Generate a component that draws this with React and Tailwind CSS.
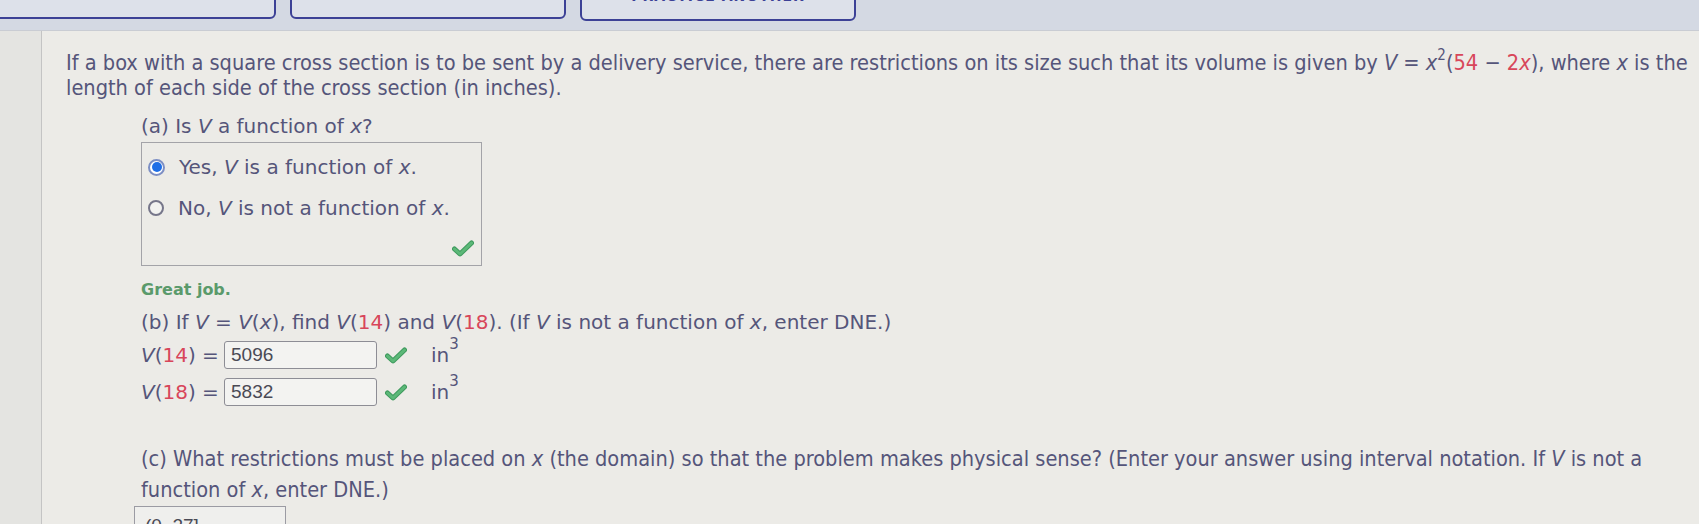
import React from 'react';

// Homework question card: volume of a square-cross-section box.

const TEXT = 'text-[#55557a]';
const RED = 'text-[#d8465a]';

function Var({ children }) {
  return <i className="italic">{children}</i>;
}

function Check() {
  return (
    <svg width="22" height="17" viewBox="0 0 22 17" className="block">
      <path d="M2.5 9 L8 14 L19.5 3" fill="none" stroke="#3f9a5e" strokeWidth="5" strokeLinecap="round" strokeLinejoin="round" />
      <path d="M2.5 9 L8 14 L19.5 3" fill="none" stroke="#5cb878" strokeWidth="3" strokeLinecap="round" strokeLinejoin="round" />
    </svg>
  );
}

function Radio({ checked }) {
  if (checked) {
    return (
      <span className="flex h-[17px] w-[17px] items-center justify-center rounded-full border-2 border-[#7d8fc4] bg-white">
        <span className="h-[10px] w-[10px] rounded-full bg-[#1f6ee6]" />
      </span>
    );
  }
  return <span className="block h-[16px] w-[16px] rounded-full border-2 border-[#76768a] bg-[#f2f2f0]" />;
}

function AnswerRow({ arg, value }) {
  return (
    <div className="flex h-[28px] items-center">
      <span className="w-[83px] leading-[28px]">
        <Var>V</Var>(<span className={RED}>{arg}</span>) =
      </span>
      <div className="flex h-[28px] w-[153px] items-center rounded-[3px] border border-[#8d8d95] bg-[#f3f3f1] px-[6px] font-['Liberation_Sans',sans-serif] text-[19px] text-[#4a4a55]">
        {value}
      </div>
      <span className="ml-[8px] w-[22px]">
        <Check />
      </span>
      <span className="ml-[24px] leading-[28px]">
        in<sup className="relative -top-[4px] align-top text-[15px] leading-none">3</sup>
      </span>
    </div>
  );
}

export default function App() {
  return (
    <div className={`h-[524px] w-[1699px] overflow-hidden bg-[#e4e4e1] font-['DejaVu_Sans',Verdana,sans-serif] ${TEXT}`}>
      {/* tab buttons, tops cut off by the window */}
      <div className="flex h-[31px] gap-[14px] border-b border-[#c9ccd3] bg-[#d4d9e3]">
        <div className="-ml-[10px] -mt-[21px] h-[40px] w-[286px] rounded-b-[6px] border-2 border-[#3c4196] bg-[#dde1ea]" />
        <div className="-mt-[21px] h-[40px] w-[276px] rounded-b-[6px] border-2 border-[#3c4196] bg-[#dde1ea]" />
        <div className="-mt-[21px] flex h-[42px] w-[276px] justify-center rounded-b-[6px] border-2 border-[#3c4196] bg-[#dde1ea] pt-[7px] text-[14px] font-bold leading-[16px] tracking-[1px] text-[#3c4196]">
          PRACTICE ANOTHER
        </div>
      </div>

      <div className="ml-[41px] h-full border-l border-[#c4c4c4] bg-[#ecebe7] pl-[24px] pt-[19px]">
        <p className="font-stretch-condensed text-[21.6px] leading-[25px]">
          If a box with a square cross section is to be sent by a delivery service, there are restrictions on its size such that its volume is given by{' '}
          <Var>V</Var> = <Var>x</Var>
          <sup className="relative -top-[2px] align-top text-[15px] leading-none">2</sup>(<span className={RED}>54</span> − <span className={RED}>2<Var>x</Var></span>), where <Var>x</Var> is the
          <br />
          length of each side of the cross section (in inches).
        </p>

        <div className="ml-[75px]">
          <div className="mt-[12px] text-[20px] leading-[28px]">
            (a) Is <Var>V</Var> a function of <Var>x</Var>?
          </div>

          <div className="mt-[2px] w-[341px] border border-[#a3a3a8] pb-[8px] pl-[6px] pr-[7px] pt-[10px] text-[20px] leading-[28px]">
            <div className="flex h-[28px] items-center gap-[14px]">
              <Radio checked />
              <span>
                Yes, <Var>V</Var> is a function of <Var>x</Var>.
              </span>
            </div>
            <div className="mt-[13px] flex h-[28px] items-center gap-[14px]">
              <Radio />
              <span>
                No, <Var>V</Var> is not a function of <Var>x</Var>.
              </span>
            </div>
            <div className="mt-[18px] flex justify-end">
              <Check />
            </div>
          </div>

          <div className="mt-[13px] text-[16px] font-bold leading-[22px] text-[#5a9a6b]">Great job.</div>

          <div className="mt-[7px] text-[20px] leading-[28px]">
            (b) If <Var>V</Var> = <Var>V</Var>(<Var>x</Var>), find <Var>V</Var>(<span className={RED}>14</span>) and <Var>V</Var>(
            <span className={RED}>18</span>). (If <Var>V</Var> is not a function of <Var>x</Var>, enter DNE.)
          </div>

          <div className="mt-[5px] text-[20px]">
            <AnswerRow arg="14" value="5096" />
            <div className="mt-[9px]">
              <AnswerRow arg="18" value="5832" />
            </div>
          </div>

          <p className="mt-[37px] font-stretch-condensed text-[21.6px] leading-[31px]">
            (c) What restrictions must be placed on <Var>x</Var> (the domain) so that the problem makes physical sense? (Enter your answer using interval notation. If <Var>V</Var> is not a
            <br />
            function of <Var>x</Var>, enter DNE.)
          </p>

          <div className="-ml-[7px] mt-[1px] flex h-[32px] w-[152px] items-start border border-[#9b9ba3] bg-[#efefed] px-[10px] pt-[9px] font-['Liberation_Sans',sans-serif] text-[19px] leading-[20px] text-[#4a4a55]">
            (0, 27]
          </div>
        </div>
      </div>
    </div>
  );
}
